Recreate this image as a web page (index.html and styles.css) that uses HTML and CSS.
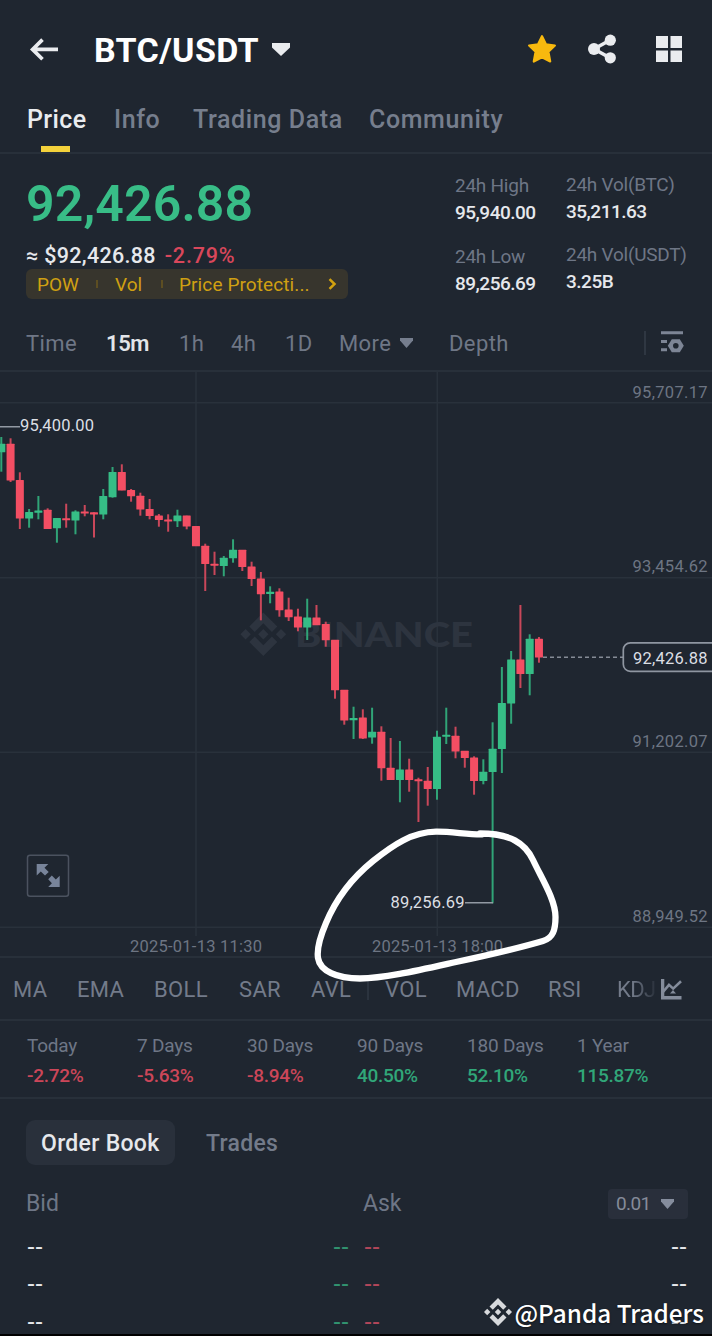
FILE: index.html
```html
<!DOCTYPE html>
<html lang="en">
<head>
<meta charset="utf-8">
<title>BTC/USDT</title>
<link rel="stylesheet" href="styles.css">
</head>
<body>
<div class="app">
  <header class="header">
    <svg class="back" width="30" height="24" viewBox="0 0 30 24"><path d="M29 12.4H4M13.5 2.6 3.6 12.4l9.9 9.8" fill="none" stroke="#eaecef" stroke-width="3.7"/></svg>
    <h1 class="pair">BTC/USDT</h1>
    <svg class="pair-caret" width="18" height="13" viewBox="0 0 18 13"><path d="M0 0h18v4.500L9 13 0 4.500z" fill="#eaecef"/></svg>
    <div class="actions">
      <svg width="30" height="30" viewBox="0 0 30 30"><path d="M15 2.200 18.900 10.300 27.900 11.500 21.400 17.800 23.200 27.500 15 23.300 6.800 27.500 8.600 17.800 2.100 11.500 11.100 10.300z" fill="#f8b90e" stroke="#f8b90e" stroke-width="2.200" stroke-linejoin="round"/></svg>
      <svg width="30" height="30" viewBox="0 0 30 30"><g fill="#eaecef"><circle cx="7" cy="15" r="6"/><circle cx="23.300" cy="6.200" r="5.600"/><circle cx="23.300" cy="23.800" r="5.600"/></g><path d="M23.300 6 7 15l16.300 9" fill="none" stroke="#eaecef" stroke-width="3.600"/></svg>
      <svg width="26" height="26" viewBox="0 0 26 26"><path d="M0 0h12v12H0zM14.500 0h11.500v12H14.500zM0 14.500h12V26H0zM14.500 14.500h11.500V26H14.500z" fill="#eaecef"/></svg>
    </div>
  </header>

  <nav class="tabs">
    <span class="tab tab-active">Price</span><span class="tab info">Info</span><span class="tab data">Trading Data</span><span class="tab community">Community</span>
  </nav>

  <section class="summary">
    <div class="quote">
      <div class="last">92,426.88</div>
      <div class="fiat"><span class="fiat-value">≈ $92,426.88</span><span class="fiat-change">-2.79%</span></div>
      <div class="tags">
        <span class="pow">POW</span><i></i><span class="vol">Vol</span><i></i><span class="protect">Price Protecti...</span>
        <svg width="9" height="12" viewBox="0 0 9 12"><path d="M1.500 1.200 6.500 6l-5 4.800" fill="none" stroke="#d3a20f" stroke-width="2.500"/></svg>
      </div>
    </div>
    <div class="stats">
      <div class="stat"><span class="label high">24h High</span><b>95,940.00</b></div>
      <div class="stat"><span class="label low">24h Low</span><b>89,256.69</b></div>
    </div>
    <div class="stats stats-volume">
      <div class="stat"><span class="label">24h Vol(BTC)</span><b>35,211.63</b></div>
      <div class="stat"><span class="label">24h Vol(USDT)</span><b>3.25B</b></div>
    </div>
  </section>

  <nav class="intervals">
    <span>Time</span><span class="selected">15m</span><span>1h</span><span>4h</span><span>1D</span>
    <span class="more">More<svg width="13" height="10" viewBox="0 0 13 10"><path d="M0 0h13v2.500L6.500 10 0 2.500z" fill="#767e8e"/></svg></span>
    <span>Depth</span>
    <div class="settings">
      <svg width="24" height="22" viewBox="0 0 24 22"><path d="M1 1.700h22M1 10.500h6M1 18.800h6" stroke="#7d8595" stroke-width="3"/><path d="M11.800 8.300h8l4 6.400-4 6.500h-8l-4-6.500z" fill="#7d8595"/><circle cx="15.800" cy="14.800" r="2.800" fill="#1f2630"/></svg>
    </div>
  </nav>

  <section class="chart">
    <svg id="chart" width="712" height="584" viewBox="0 372 712 584">
      <g stroke="#29313b" stroke-width="1.600">
        <path d="M196 371V936M437.300 371V936M0 402.800H712M0 577.700H712M0 752.300H712M0 927.300H712"/>
      </g>
      <g fill="#2d343f">
        <path d="m263.300 612.500 14 14-5.400 5.400-8.600-8.600-8.600 8.600-5.400-5.400zM263.300 656l-14-14 5.400-5.400 8.600 8.600 8.600-8.600 5.400 5.400zM263.300 629l5.200 5.200-5.200 5.200-5.200-5.200zM245.600 629l5.200 5.200-5.200 5.200-5.200-5.200zM281 629l5.200 5.200-5.200 5.200-5.200-5.200z"/>
        <text class="brand" x="295" y="647" textLength="178" lengthAdjust="spacingAndGlyphs">BINANCE</text>
      </g>
      <g id="candles"></g>
      <g class="axis" text-anchor="end">
        <text x="707.500" y="397.500" textLength="75">95,707.17</text>
        <text x="707.500" y="572" textLength="75">93,454.62</text>
        <text x="707.500" y="747" textLength="75">91,202.07</text>
        <text x="707.500" y="921.500" textLength="75">88,949.52</text>
      </g>
      <g class="axis">
        <text x="130" y="952" textLength="132">2025-01-13 11:30</text>
        <text x="372" y="952" textLength="131">2025-01-13 18:00</text>
      </g>
      <path d="M0 426.800H20M465 902.700H493" stroke="#9299a3" stroke-width="1.600"/>
      <g class="mark">
        <text x="20" y="431" textLength="74">95,400.00</text>
        <text x="390.500" y="908" textLength="74">89,256.69</text>
      </g>
      <path d="M543 657.300H623" stroke="#858b96" stroke-width="1.600" stroke-dasharray="4 3"/>
      <rect x="623.300" y="642.800" width="100" height="28.500" rx="7" fill="#1f2630" stroke="#8f96a1" stroke-width="1.700"/>
      <text class="mark" x="633" y="663.500" textLength="74.500">92,426.88</text>
      <rect x="27.500" y="855.300" width="41" height="41" rx="2.500" fill="none" stroke="#4b525f" stroke-width="1.500"/>
      <path d="M36.700 864h11.600l-3.800 3.800 4.200 4.200-3.700 3.600-4.200-4.200-4.100 4.100zM59.700 887H48.200l3.700-3.800-3.700-4 3.600-3.700 4 4 3.900-3.800z" fill="#78849a"/>
    </svg>
  </section>

  <nav class="indicators">
    <span>MA</span><span>EMA</span><span>BOLL</span><span>SAR</span><span>AVL</span><i></i><span>VOL</span><span>MACD</span><span>RSI</span><span class="fading">KDJ</span>
    <svg width="21" height="21" viewBox="0 0 21 21"><path d="M1.600 0v18.700H20.500" fill="none" stroke="#848c9b" stroke-width="3.400"/><path d="m2 13 6-7.200 4.200 3.800L20 2.300" fill="none" stroke="#848c9b" stroke-width="2.600"/><path d="m12 11 3 3.500H9z" fill="#848c9b"/></svg>
  </nav>

  <section class="performance">
    <div class="down"><span>Today</span><b>-2.72%</b></div>
    <div class="down"><span>7 Days</span><b>-5.63%</b></div>
    <div class="down"><span>30 Days</span><b>-8.94%</b></div>
    <div class="up"><span>90 Days</span><b>40.50%</b></div>
    <div class="up"><span>180 Days</span><b>52.10%</b></div>
    <div class="up"><span>1 Year</span><b>115.87%</b></div>
  </section>

  <section class="book">
    <div class="book-tabs"><span class="book-active">Order Book</span><span class="trades">Trades</span></div>
    <div class="book-head"><span>Bid</span><span>Ask</span>
      <div class="step">0.01<svg width="13" height="10" viewBox="0 0 13 10"><path d="M0 0h13v2.500L6.500 10 0 2.500z" fill="#858d9d"/></svg></div>
    </div>
    <div class="row"><span>--</span><span class="bid">--</span><span class="ask">--</span><span class="amount">--</span></div>
    <div class="row"><span>--</span><span class="bid">--</span><span class="ask">--</span><span class="amount">--</span></div>
    <div class="row"><span>--</span><span class="bid">--</span><span class="ask">--</span><span class="amount">--</span></div>
  </section>
  <div class="bottom-edge"></div>

  <svg class="scribble" width="712" height="1336" viewBox="0 0 712 1336"><path d="M482 834.300C467 834.500 452 831.500 436 831.700C412 832 393 845 373 861C352 878 336 899 326 923C320 937 316.500 948 318 958C320 971 337 978.500 360 978.500C384 978.500 420 970 456 962C489 955 519 948 543 941C553 938 555.500 930 555.500 917C555.500 900 542 879 533 860C525 843 510 833.500 480 833.500" fill="none" stroke="#fff" stroke-width="6.300" stroke-linecap="round" stroke-linejoin="round"/></svg>

  <div class="author">
    <svg width="28" height="28" viewBox="0 0 28 28"><path d="m14 0 8.500 8.500-3.300 3.300L14 6.600l-5.200 5.200-3.300-3.300zM14 28l-8.500-8.500 3.300-3.300 5.200 5.200 5.200-5.200 3.300 3.300zM14 10.800l3.200 3.200-3.200 3.200-3.200-3.200zM3.200 10.800 6.400 14l-3.200 3.200L0 14zM24.800 10.800 28 14l-3.200 3.200-3.200-3.200z" fill="#d7d9dc"/></svg>
    <span>@Panda Traders</span>
  </div>
</div>
<script src="chart.js"></script>
</body>
</html>
```
FILE: chart.js
```js
// Each candle: direction, high, body top, body bottom, low (chart units)
const candles = [
  ["g", 437, 444, 452, 471.7], ["r", 438.3, 444, 480.3, 482], ["r", 472.3, 480.3, 518.3, 529],
  ["g", 509, 512.3, 518.3, 527.7], ["g", 496, 510.7, 512.5, 519.3], ["r", 508.3, 510, 528.7, 528.7],
  ["g", 518.3, 518.3, 528, 542.7], ["r", 503.7, 518.5, 520, 527.7], ["g", 510.3, 511.7, 520.3, 534.3],
  ["r", 505, 511.7, 513.3, 516.3], ["r", 512.3, 512.6, 514.2, 537.5], ["g", 489, 496.3, 514.3, 519.3],
  ["g", 467, 472.3, 497, 497.7], ["r", 464.3, 472.3, 490.3, 490.3], ["r", 489, 490.3, 496, 501.7],
  ["r", 492.7, 496, 509.3, 515.7], ["r", 499, 509.3, 515.7, 519.3], ["r", 514, 515.7, 519.7, 526.7],
  ["r", 514.3, 519.7, 521.2, 531.7], ["g", 509.7, 515.7, 521, 527], ["r", 515.7, 515.7, 526.3, 529.3],
  ["r", 526.3, 526.3, 546, 546], ["r", 543.7, 546, 563.7, 591], ["r", 551.7, 564, 565.5, 575],
  ["g", 556, 558, 565.7, 576.3], ["g", 539.3, 550, 558, 562.7], ["r", 550, 550, 566.7, 571],
  ["r", 561.7, 566.7, 578.7, 586], ["r", 572, 578.7, 594, 620.3], ["g", 586.3, 592, 593.7, 603.3],
  ["r", 588.3, 591.7, 610, 616.7], ["r", 597.7, 609.7, 617, 621], ["r", 608.7, 616.7, 627.3, 631.3],
  ["g", 598.7, 617.7, 627.3, 640], ["r", 605, 617.7, 625, 625], ["r", 621.7, 624.3, 640, 646.7],
  ["r", 640, 640, 690, 698.7], ["r", 690, 690, 720.3, 724.7], ["g", 706.7, 718.3, 720, 739],
  ["r", 709.3, 717.7, 738.3, 739], ["g", 707.7, 732, 737.3, 743.7], ["r", 726.3, 732, 768, 780.7],
  ["r", 738, 768, 779.7, 779.7], ["g", 741, 769.7, 779.7, 802.3], ["r", 758.7, 769.7, 779.7, 791.7],
  ["r", 777.7, 779.5, 781, 822], ["r", 767, 781, 788.7, 805.7], ["g", 730.7, 737, 788.7, 799.7],
  ["g", 707.7, 735, 736.5, 744], ["r", 726.7, 736, 751.3, 758.3], ["r", 751, 751, 757.7, 767.7],
  ["r", 756.3, 757.7, 780.7, 794.7], ["g", 759.3, 772, 780.7, 784.3], ["g", 722.3, 749, 771.7, 903.3],
  ["g", 667, 703.3, 748.7, 773], ["g", 651, 659.7, 703.3, 723.7], ["r", 605, 659.7, 673.7, 688],
  ["g", 634.3, 639, 673.7, 695.3], ["r", 637, 639, 657.3, 662.7]
];
const colors = { g: "#36bd86", r: "#f34e63" };
const wickColors = { g: "#30a477", r: "#c9475a" };

document.getElementById("candles").innerHTML = candles.map(([d, high, top, bottom, low], i) => {
  const x = 1.3 + i * 9.27;
  return `<path d="M${x} ${high}V${low}" stroke="${wickColors[d]}" stroke-width="2"/>` +
    `<rect x="${x - 4}" y="${top - 0.3}" width="8" height="${bottom - top + 0.6}" rx=".5" fill="${colors[d]}"/>`;
}).join("");
```
FILE: styles.css
```css
* { box-sizing: border-box; }
body { margin: 0; background: #1f2630; font-family: Roboto, "Noto Sans", sans-serif; color: #e6e8ec; }
.app { position: relative; width: 712px; height: 1336px; overflow: hidden; display: flex; flex-direction: column; }
.app > * { flex-shrink: 0; }
svg { display: block; flex: none; }
span, b, h1, .last { white-space: nowrap; }

.header { height: 98px; display: flex; align-items: center; padding: 0 30px 0 29px; }
.pair { margin: 2px 0 0 35px; width: 164px; font-size: 34px; font-weight: 700; letter-spacing: .35px; line-height: 40px; color: #fff; }
.pair-caret { margin-left: 14px; }
.actions { margin-left: auto; display: flex; align-items: center; }
.actions svg + svg { margin-left: 30px; }
.actions svg:last-child { margin-left: 39px; }

.tabs { height: 56px; border-bottom: 2px solid #28303a; padding: 0 27px; display: grid; grid-template-columns: 87px 79px 176px auto; font-size: 25px; font-weight: 500; line-height: 43px; color: #767e8d; letter-spacing: .6px; }
.tab-active { color: #eaecef; letter-spacing: .4px; }
.tab-active::after { content: ""; display: block; width: 29px; height: 6px; margin: 5px 0 0 14px; background: #f3d13b; }

.summary { height: 162px; display: grid; grid-template-columns: 429px 111px auto; padding-left: 26px; }
.quote { padding-top: 23px; }
.last { font-size: 50px; font-weight: 600; line-height: 54px; height: 63px; letter-spacing: .15px; color: #38bd87; }
.fiat { display: flex; gap: 9px; height: 29px; font-size: 21.500px; font-weight: 500; line-height: 31px; letter-spacing: .3px; }
.fiat-change { color: #d9475b; letter-spacing: .8px; }
.tags { width: 322px; height: 30px; display: flex; align-items: center; padding-left: 11px; border-radius: 6px; background: #37352d; color: #d0a012; font-size: 19px; }
.tags i { width: 2px; height: 8px; background: #5d4e22; }
.pow { width: 59px; }
.vol { width: 46px; margin-left: 17px; }
.protect { width: 149px; margin-left: 16px; letter-spacing: .1px; }
.stats { padding-top: 18px; display: flex; flex-direction: column; gap: 16px; }
.stats-volume { padding-top: 17px; }
.stat { display: flex; flex-direction: column; height: 55px; font-size: 19px; line-height: 27px; }
.stats-volume .stat { height: 54px; }
.label { color: #6e7686; letter-spacing: -.25px; }
.stat b { font-weight: 500; letter-spacing: -.5px; }

.intervals { height: 56px; border-bottom: 2px solid #28303a; padding-left: 26px; display: grid; grid-template-columns: 80px 73px 52px 54px 54px 110px 195px auto; align-items: center; font-size: 22px; letter-spacing: .4px; color: #6f7786; }
.selected { color: #e3e5e9; font-weight: 600; letter-spacing: -.4px; }
.more { display: flex; align-items: center; gap: 9px; }
.settings { height: 24px; border-left: 2px solid #2f3742; padding-left: 14px; }

.chart { height: 584px; }
.axis { font-size: 16.500px; fill: #6d7583; }
.mark { font-size: 16.500px; fill: #dcdfe4; }
.brand { font-family: Lato, sans-serif; font-size: 35px; font-weight: 900; }

.indicators { height: 63px; border-top: 2px solid #28303a; padding: 2px 0 0 13px; display: grid; grid-template-columns: 64px 77px 85px 72px 56px 18px 71px 92px 69px 44px auto; align-items: center; font-size: 22px; letter-spacing: .35px; color: #737b8a; }
.indicators i { width: 2px; height: 20px; background: #2b333e; }
.fading { background: linear-gradient(90deg, #737b8a 35%, #1f2630 95%); background-clip: text; color: transparent; letter-spacing: -.6px; }

.performance { height: 80px; border: solid #28303a; border-width: 2px 0; padding: 10px 0 0 27px; display: grid; grid-template-columns: repeat(6, 110px); font-size: 19px; line-height: 29.500px; letter-spacing: -.2px; color: #6e7686; }
.performance div { display: flex; flex-direction: column; }
.performance b { font-weight: 500; letter-spacing: -.3px; }
.down b { color: #cc4659; }
.up b { color: #31a779; }

.book { height: 235px; overflow: hidden; padding: 21px 24px 0 26px; }
.book-tabs { display: flex; align-items: center; height: 45px; font-size: 23px; font-weight: 500; letter-spacing: .3px; }
.book-active { width: 149px; height: 45px; padding-left: 15px; line-height: 47px; border-radius: 9px; background: #29303b; }
.trades { margin-left: 31px; padding-top: 2px; color: #737b8a; }
.book-head { height: 62px; padding-top: 15px; display: grid; grid-template-columns: 337px auto 80px; align-items: center; font-size: 23px; color: #6e7686; }
.step { height: 30px; display: flex; align-items: center; gap: 10px; padding-left: 8px; border-radius: 4px; background: #292f3b; color: #858b99; font-size: 19px; letter-spacing: -.6px; }
.row { display: grid; grid-template-columns: 306px 31px 1fr auto; height: 37.500px; align-items: center; padding: 0 1px; font-family: "Liberation Sans", sans-serif; font-size: 24px; line-height: 36px; }
.bid { color: #31936f; }
.ask { color: #b2465a; }
.bottom-edge { height: 2px; background: #000; }

.scribble { position: absolute; left: 0; top: 0; }
.author { position: absolute; right: 8px; bottom: 6px; height: 36px; display: flex; align-items: center; gap: 3px; color: #fff; font-family: "Noto Sans CJK SC", sans-serif; font-size: 24.300px; font-weight: 500; text-shadow: 0 1px 2px #0008; }
```
